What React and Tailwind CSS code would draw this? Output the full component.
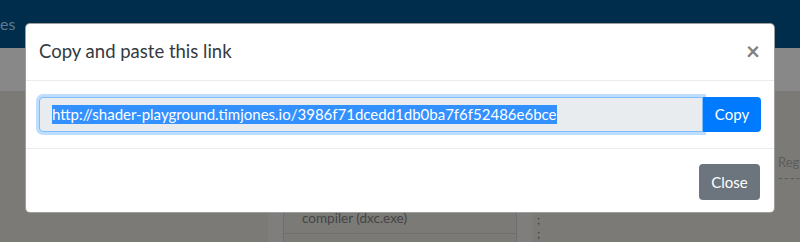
import React from "react";

const link = "http://shader-playground.timjones.io/3986f71dcedd1db0ba7f6f52486e6bce";

function Backdrop() {
  return (
    <div className="flex flex-col w-full h-full">
      {/* top nav */}
      <div className="h-[48px] bg-[#012d4d] flex items-start pt-[14px] shrink-0">
        <span className="text-[16px] leading-[20px] text-[#5d7a92]">es</span>
      </div>
      {/* toolbar */}
      <div className="h-[44px] bg-[#888888] border-b border-[#7a7a7a] shrink-0" />
      {/* panes */}
      <div className="flex flex-1 bg-[#7b7a77]">
        <div className="w-[268px]" />
        <div className="w-[15px] bg-[#7f7e7d]" />
        <div className="w-[234px] border-x border-[#6f6e6c] flex flex-col">
          <div className="h-[142px] shrink-0 flex items-end pl-[18px] pb-[6px] border-b border-[#6f6e6c]">
            <span className="text-[13.5px] leading-[18px] text-[#444444]">compiler (dxc.exe)</span>
          </div>
        </div>
        <div className="w-[16px] bg-[#7f7e7d]" />
        <div className="flex-1 flex">
          <div className="flex flex-col pl-[4px] pt-[121px] text-[12px] leading-[14px] text-[#3c3c3c]">
            <span>;</span>
            <span>;</span>
          </div>
          <div className="flex-1" />
          <div className="w-[22px] flex flex-col pt-[62px] text-[13px] leading-[16px] text-[#5c5c5c] overflow-hidden whitespace-nowrap">
            <span>Reg:</span>
            <span className="tracking-[1px]">----</span>
          </div>
        </div>
      </div>
    </div>
  );
}

export default function App() {
  return (
    <div className="relative w-[800px] h-[242px] overflow-hidden" style={{ fontFamily: "Lato, 'Liberation Sans', sans-serif" }}>
      <Backdrop />
      <div className="absolute left-[25px] top-[23px] w-[750px] bg-white rounded-[5px] border border-[#5e5e5e]/60 flex flex-col">
        {/* header */}
        <div className="h-[57px] flex items-center justify-between pl-[13px] pr-[14px] border-b border-[#e9ecef]">
          <h5 className="text-[18.5px] leading-[24px] text-[#343a40] pb-[2px]">Copy and paste this link</h5>
          <button className="text-[24px] leading-[24px] font-bold text-[#808080] pb-[3px]">×</button>
        </div>
        {/* body */}
        <div className="px-[13px] py-[16px] border-b border-[#e9ecef] flex">
          <div className="flex-1 h-[35px] bg-[#e9ecef] border border-[#80bdff] rounded-l-[4px] shadow-[0_0_0_3px_rgba(0,123,255,0.25)] flex items-center pl-[12px] overflow-hidden whitespace-nowrap">
            <span className="bg-[#3390ff] text-white text-[15px] leading-[19px]">{link}</span>
          </div>
          <button className="w-[58px] h-[35px] bg-[#007bff] text-white text-[15px] rounded-r-[4px]">Copy</button>
        </div>
        {/* footer */}
        <div className="h-[63px] flex items-start pt-[15px] justify-end pr-[14px]">
          <button className="w-[61px] h-[36px] bg-[#6c757d] text-white text-[15px] rounded-[4px]">Close</button>
        </div>
      </div>
    </div>
  );
}
